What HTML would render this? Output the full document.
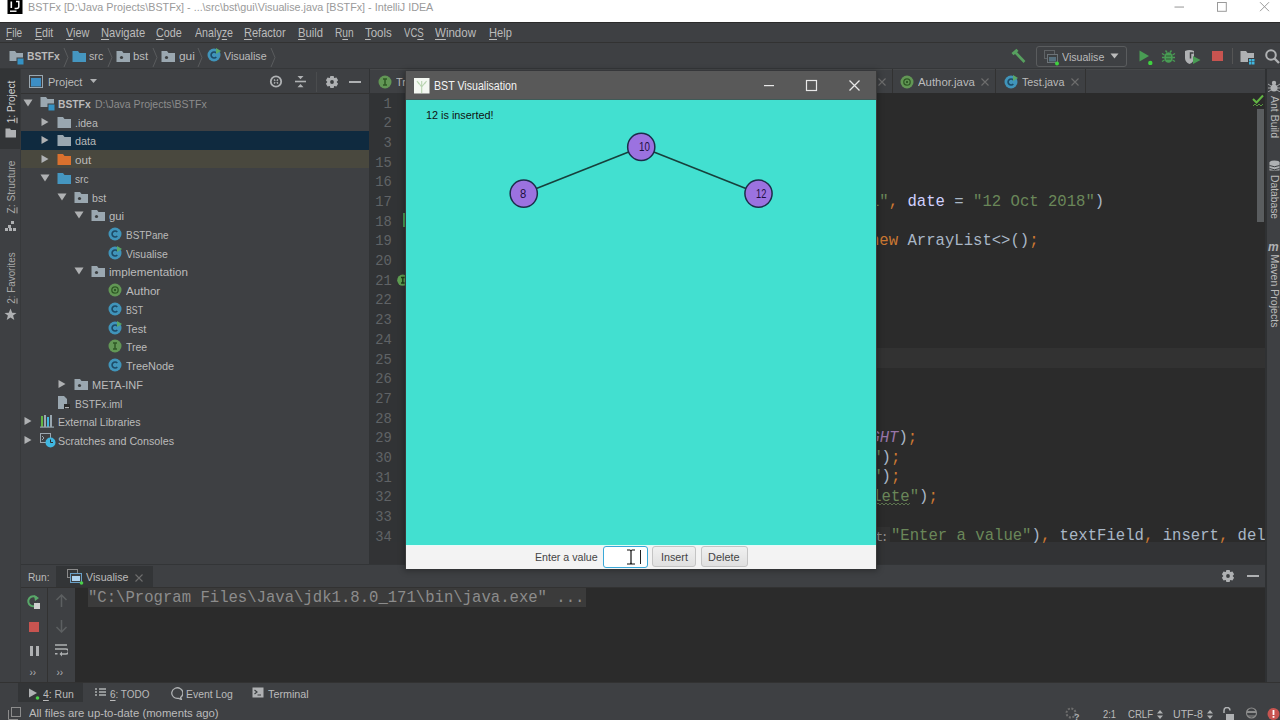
<!DOCTYPE html>
<html><head><meta charset="utf-8"><title>IntelliJ IDEA</title>
<style>
html,body{margin:0;padding:0;}
body{width:1280px;height:720px;overflow:hidden;position:relative;background:#3c3f41;font-family:"Liberation Sans",sans-serif;}
body>div{position:absolute;}
u{text-decoration-thickness:1px;text-underline-offset:1.5px;}
</style></head><body>
<div style="left:0px;top:0px;width:1280px;height:720px;background:#3e4043;"></div>
<div style="left:0px;top:0px;width:1280px;height:21.5px;background:#ffffff;"></div>
<div style="left:0px;top:21.5px;width:1280px;height:1.5px;background:#2b2b2b;"></div>
<svg style="position:absolute;left:7px;top:0px;" width="16" height="14" viewBox="0 0 16 14"><rect x="0.5" y="0" width="15" height="14" fill="#000"/><rect x="3.5" y="1.5" width="1.6" height="6.5" fill="#fff"/><path d="M9 1.5 H11.8 V6.5 Q11.8 8.5 9.5 8.5 H7.6" stroke="#fff" stroke-width="1.5" fill="none"/><rect x="3" y="10.5" width="6.5" height="1.4" fill="#fff"/></svg>
<div style="left:27.50px;top:0.19px;font-size:11.0px;line-height:15px;color:#9a9a9a;font-family:'Liberation Sans',sans-serif;white-space:pre;transform:scaleX(0.9784);transform-origin:0 0;">BSTFx [D:\Java Projects\BSTFx] - ...\src\bst\gui\Visualise.java [BSTFx] - IntelliJ IDEA</div>
<svg style="position:absolute;left:1168px;top:0px;" width="112" height="21" viewBox="0 0 112 21"><rect x="6.5" y="6.5" width="9.5" height="1.1" fill="#a0a0a0"/><rect x="49.5" y="2.5" width="8.8" height="8.8" fill="none" stroke="#9a9a9a" stroke-width="1"/><path d="M92 2.2 L101 11.2 M101 2.2 L92 11.2" stroke="#9a9a9a" stroke-width="1"/></svg>
<div style="left:6.10px;top:24.77px;font-size:12.2px;line-height:17px;color:#bbbbbb;font-family:'Liberation Sans',sans-serif;white-space:pre;transform:scaleX(0.8248);transform-origin:0 0;"><u>F</u>ile</div>
<div style="left:34.90px;top:24.77px;font-size:12.2px;line-height:17px;color:#bbbbbb;font-family:'Liberation Sans',sans-serif;white-space:pre;transform:scaleX(0.8714);transform-origin:0 0;"><u>E</u>dit</div>
<div style="left:66.00px;top:24.77px;font-size:12.2px;line-height:17px;color:#bbbbbb;font-family:'Liberation Sans',sans-serif;white-space:pre;transform:scaleX(0.8920);transform-origin:0 0;"><u>V</u>iew</div>
<div style="left:100.50px;top:24.77px;font-size:12.2px;line-height:17px;color:#bbbbbb;font-family:'Liberation Sans',sans-serif;white-space:pre;transform:scaleX(0.9170);transform-origin:0 0;"><u>N</u>avigate</div>
<div style="left:156.00px;top:24.77px;font-size:12.2px;line-height:17px;color:#bbbbbb;font-family:'Liberation Sans',sans-serif;white-space:pre;transform:scaleX(0.8854);transform-origin:0 0;"><u>C</u>ode</div>
<div style="left:194.60px;top:24.77px;font-size:12.2px;line-height:17px;color:#bbbbbb;font-family:'Liberation Sans',sans-serif;white-space:pre;transform:scaleX(0.8764);transform-origin:0 0;">Analy<u>z</u>e</div>
<div style="left:243.75px;top:24.77px;font-size:12.2px;line-height:17px;color:#bbbbbb;font-family:'Liberation Sans',sans-serif;white-space:pre;transform:scaleX(0.9042);transform-origin:0 0;"><u>R</u>efactor</div>
<div style="left:297.60px;top:24.77px;font-size:12.2px;line-height:17px;color:#bbbbbb;font-family:'Liberation Sans',sans-serif;white-space:pre;transform:scaleX(0.9227);transform-origin:0 0;"><u>B</u>uild</div>
<div style="left:334.75px;top:24.77px;font-size:12.2px;line-height:17px;color:#bbbbbb;font-family:'Liberation Sans',sans-serif;white-space:pre;transform:scaleX(0.8341);transform-origin:0 0;">R<u>u</u>n</div>
<div style="left:365.20px;top:24.77px;font-size:12.2px;line-height:17px;color:#bbbbbb;font-family:'Liberation Sans',sans-serif;white-space:pre;transform:scaleX(0.9419);transform-origin:0 0;"><u>T</u>ools</div>
<div style="left:403.80px;top:24.77px;font-size:12.2px;line-height:17px;color:#bbbbbb;font-family:'Liberation Sans',sans-serif;white-space:pre;transform:scaleX(0.7860);transform-origin:0 0;">VC<u>S</u></div>
<div style="left:434.70px;top:24.77px;font-size:12.2px;line-height:17px;color:#bbbbbb;font-family:'Liberation Sans',sans-serif;white-space:pre;transform:scaleX(0.9449);transform-origin:0 0;"><u>W</u>indow</div>
<div style="left:488.50px;top:24.77px;font-size:12.2px;line-height:17px;color:#bbbbbb;font-family:'Liberation Sans',sans-serif;white-space:pre;transform:scaleX(0.9097);transform-origin:0 0;"><u>H</u>elp</div>
<div style="left:0px;top:41.5px;width:1280px;height:1px;background:#323232;"></div>
<svg style="position:absolute;left:9px;top:50px;" width="16" height="15" viewBox="0 0 16 15"><path d="M0.5 1 H6 L7.5 3 H14 V11 H0.5 Z" fill="#9aa7b0"/><rect x="8" y="8" width="7" height="7" fill="#3592c4" stroke="#3c3f41" stroke-width="1"/></svg>
<div style="left:26.70px;top:47.91px;font-size:11.8px;line-height:17px;color:#bbbbbb;font-family:'Liberation Sans',sans-serif;font-weight:bold;white-space:pre;transform:scaleX(0.8753);transform-origin:0 0;">BSTFx</div>
<svg style="position:absolute;left:62.5px;top:47px;" width="6" height="21" viewBox="0 0 6 21"><path d="M1 1 L5 10.5 L1 20" fill="none" stroke="#5a5c5e" stroke-width="1"/></svg>
<svg style="position:absolute;left:72px;top:50px;" width="15" height="13" viewBox="0 0 15 13"><path d="M0.5 1 H6 L7.5 3 H14 V12 H0.5 Z" fill="#4596c0"/></svg>
<div style="left:88.80px;top:47.91px;font-size:11.8px;line-height:17px;color:#bbbbbb;font-family:'Liberation Sans',sans-serif;white-space:pre;transform:scaleX(0.9034);transform-origin:0 0;">src</div>
<svg style="position:absolute;left:106.5px;top:47px;" width="6" height="21" viewBox="0 0 6 21"><path d="M1 1 L5 10.5 L1 20" fill="none" stroke="#5a5c5e" stroke-width="1"/></svg>
<svg style="position:absolute;left:116px;top:50px;" width="15" height="13" viewBox="0 0 15 13"><path d="M0.5 1 H6 L7.5 3 H14 V12 H0.5 Z" fill="#9aa7b0"/><circle cx="5.5" cy="7.5" r="1.6" fill="#3c3f41"/></svg>
<div style="left:133.20px;top:47.91px;font-size:11.8px;line-height:17px;color:#bbbbbb;font-family:'Liberation Sans',sans-serif;white-space:pre;transform:scaleX(0.9660);transform-origin:0 0;">bst</div>
<svg style="position:absolute;left:152px;top:47px;" width="6" height="21" viewBox="0 0 6 21"><path d="M1 1 L5 10.5 L1 20" fill="none" stroke="#5a5c5e" stroke-width="1"/></svg>
<svg style="position:absolute;left:161px;top:50px;" width="15" height="13" viewBox="0 0 15 13"><path d="M0.5 1 H6 L7.5 3 H14 V12 H0.5 Z" fill="#9aa7b0"/><circle cx="5.5" cy="7.5" r="1.6" fill="#3c3f41"/></svg>
<div style="left:178.50px;top:47.91px;font-size:11.8px;line-height:17px;color:#bbbbbb;font-family:'Liberation Sans',sans-serif;white-space:pre;transform:scaleX(1.0095);transform-origin:0 0;">gui</div>
<svg style="position:absolute;left:197px;top:47px;" width="6" height="21" viewBox="0 0 6 21"><path d="M1 1 L5 10.5 L1 20" fill="none" stroke="#5a5c5e" stroke-width="1"/></svg>
<svg style="position:absolute;left:207px;top:48px;" width="15" height="14" viewBox="0 0 15 14"><circle cx="7" cy="7" r="6.5" fill="#4094ba"/><path d="M9.3 5 A3 3 0 1 0 9.3 9" stroke="#1d4a66" stroke-width="1.6" fill="none"/><path d="M9 0 L14 3 L9 6 Z" fill="#59a869"/></svg>
<div style="left:224.30px;top:47.91px;font-size:11.8px;line-height:17px;color:#bbbbbb;font-family:'Liberation Sans',sans-serif;white-space:pre;transform:scaleX(0.9064);transform-origin:0 0;">Visualise</div>
<svg style="position:absolute;left:269.5px;top:47px;" width="6" height="21" viewBox="0 0 6 21"><path d="M1 1 L5 10.5 L1 20" fill="none" stroke="#5a5c5e" stroke-width="1"/></svg>
<svg style="position:absolute;left:1010px;top:48px;" width="17" height="17" viewBox="0 0 17 17"><path d="M1.5 5 L6.5 0.8 L8.5 3 L3.5 7.2 Z" fill="#57a05f"/><path d="M5.5 4.5 L14.5 14" stroke="#57a05f" stroke-width="2.6"/></svg>
<div style="left:1036px;top:46px;width:91px;height:20.5px;border:1px solid #5a5c5e;border-radius:3px;box-sizing:border-box;"></div>
<svg style="position:absolute;left:1043px;top:49px;" width="17" height="17" viewBox="0 0 17 17"><rect x="1.5" y="1.5" width="10" height="8" fill="none" stroke="#5f6366"/><rect x="4.5" y="5.5" width="10" height="8" fill="#3d4042" stroke="#6c7378"/><rect x="6" y="8" width="7" height="4.5" fill="#56707e"/><circle cx="14" cy="14.5" r="2" fill="#3fd23f"/></svg>
<div style="left:1061.70px;top:48.91px;font-size:11.8px;line-height:17px;color:#bbbbbb;font-family:'Liberation Sans',sans-serif;white-space:pre;transform:scaleX(0.9000);transform-origin:0 0;">Visualise</div>
<svg style="position:absolute;left:1110px;top:53px;" width="10" height="6" viewBox="0 0 10 6"><path d="M0.5 0.5 H8.5 L4.5 5.5 Z" fill="#bbb"/></svg>
<svg style="position:absolute;left:1139px;top:48px;" width="14" height="17" viewBox="0 0 14 17"><path d="M0.5 2.5 L10 8 L0.5 13.5 Z" fill="#499c54"/><circle cx="11.3" cy="15" r="2.2" fill="#3fd23f"/></svg>
<svg style="position:absolute;left:1161px;top:49px;" width="15" height="15" viewBox="0 0 15 15"><path d="M1 4.5 L3.5 6 M1 8.5 H3.5 M1 12.5 L3.5 11 M14 4.5 L11.5 6 M14 8.5 H11.5 M14 12.5 L11.5 11 M4.5 1.5 L6 3.5 M10.5 1.5 L9 3.5" stroke="#499c54" stroke-width="1.4"/><ellipse cx="7.5" cy="8.5" rx="4.3" ry="5.2" fill="#499c54"/><path d="M5 7 H10 M5 10 H10" stroke="#2f5a33" stroke-width="1"/></svg>
<svg style="position:absolute;left:1184px;top:48px;" width="17" height="17" viewBox="0 0 17 17"><path d="M1 3 Q5.5 1 10 3 V10 Q10 14 5.5 16 Q1 14 1 10 Z" fill="#afb1b3"/><path d="M9.5 5 H6.5 V10.5" stroke="#3d4042" stroke-width="1.5" fill="none"/><path d="M9 8 L16.5 12 L9 16 Z" fill="#499c54"/></svg>
<div style="left:1212px;top:51.4px;width:10.5px;height:10px;background:#c75450;"></div>
<div style="left:1232px;top:48px;width:1px;height:16px;background:#555;"></div>
<svg style="position:absolute;left:1240px;top:50px;" width="16" height="15" viewBox="0 0 16 15"><path d="M0.5 1 H6 L7.5 3 H14 V12 H0.5 Z" fill="#afb1b3"/><rect x="8" y="8" width="7" height="7" fill="#3c3f41"/><rect x="9" y="9" width="2.5" height="2.5" fill="#40b6e0"/><rect x="12" y="9" width="2.5" height="2.5" fill="#40b6e0"/><rect x="9" y="12" width="2.5" height="2.5" fill="#40b6e0"/><rect x="12" y="12" width="2.5" height="2.5" fill="#40b6e0"/></svg>
<svg style="position:absolute;left:1264px;top:48px;" width="16" height="16" viewBox="0 0 16 16"><circle cx="7" cy="7" r="4.8" fill="none" stroke="#afb1b3" stroke-width="2"/><path d="M10.5 10.5 L15 15" stroke="#afb1b3" stroke-width="2.4"/></svg>
<div style="left:0px;top:68px;width:1280px;height:1px;background:#353739;"></div>
<div style="left:19.5px;top:69px;width:1px;height:613px;background:#37393b;"></div>
<div style="left:0px;top:69px;width:19.5px;height:80px;background:#323436;"></div>
<div style="left:11px;top:102.25px;transform:translate(-50%,-50%) rotate(-90deg) scaleX(0.8529);font-size:11.8px;line-height:15px;color:#cfcfcf;white-space:pre;"><u>1</u>: Project</div>
<svg style="position:absolute;left:5px;top:128px;" width="12" height="10" viewBox="0 0 12 10"><path d="M0.5 0.5 H5 L6 2 H11 V9.5 H0.5 Z" fill="#afb1b3"/></svg>
<div style="left:11px;top:187.20px;transform:translate(-50%,-50%) rotate(-90deg) scaleX(0.8568);font-size:11.8px;line-height:15px;color:#a8a8a8;white-space:pre;"><u>Z</u>: Structure</div>
<svg style="position:absolute;left:5px;top:221px;" width="12" height="10" viewBox="0 0 12 10"><rect x="6" y="0" width="3" height="3" fill="#afb1b3"/><rect x="3" y="4" width="3" height="3" fill="#afb1b3"/><rect x="0" y="7" width="3" height="3" fill="#afb1b3"/><rect x="4" y="7" width="3" height="3" fill="#afb1b3"/><rect x="8" y="7" width="3" height="3" fill="#afb1b3"/></svg>
<div style="left:11px;top:278.25px;transform:translate(-50%,-50%) rotate(-90deg) scaleX(0.8357);font-size:11.8px;line-height:15px;color:#a8a8a8;white-space:pre;"><u>2</u>: Favorites</div>
<svg style="position:absolute;left:4px;top:308px;" width="13" height="13" viewBox="0 0 13 13"><path d="M6.5 0.5 L8.2 4.7 L12.5 4.9 L9.1 7.6 L10.3 12 L6.5 9.6 L2.7 12 L3.9 7.6 L0.5 4.9 L4.8 4.7 Z" fill="#afb1b3"/></svg>
<div style="left:21px;top:92.5px;width:348px;height:1px;background:#323232;"></div>
<svg style="position:absolute;left:29px;top:75px;" width="15" height="13" viewBox="0 0 15 13"><rect x="0.5" y="0.5" width="13" height="12" fill="none" stroke="#9aa7b0"/><rect x="2" y="3" width="10" height="8.5" fill="#3d8fc6"/></svg>
<div style="left:48.40px;top:73.91px;font-size:11.8px;line-height:17px;color:#bbbbbb;font-family:'Liberation Sans',sans-serif;white-space:pre;transform:scaleX(0.9369);transform-origin:0 0;">Project</div>
<svg style="position:absolute;left:90px;top:79px;" width="8" height="5" viewBox="0 0 8 5"><path d="M0 0 H7 L3.5 4 Z" fill="#afb1b3"/></svg>
<svg style="position:absolute;left:269px;top:75px;" width="14" height="14" viewBox="0 0 14 14"><circle cx="7" cy="6.5" r="5.2" fill="none" stroke="#afb1b3" stroke-width="1.8"/><path d="M5 4.5 L6.2 5.7 M9 4.5 L7.8 5.7 M5 8.5 L6.2 7.3 M9 8.5 L7.8 7.3" stroke="#afb1b3" stroke-width="1.3"/></svg>
<svg style="position:absolute;left:294px;top:75px;" width="13" height="14" viewBox="0 0 13 14"><path d="M1 6.5 H12" stroke="#afb1b3" stroke-width="1.6"/><path d="M3.5 1 H9.5 L6.5 4.3 Z M3.5 12.2 H9.5 L6.5 8.9 Z" fill="#afb1b3"/></svg>
<div style="left:316px;top:72px;width:1px;height:20px;background:#4a4c4e;"></div>
<svg style="position:absolute;left:324.5px;top:75px;" width="14" height="14" viewBox="0 0 14 14"><path d="M4.81 2.96 L5.37 0.91 L8.63 0.91 L9.19 2.96 L9.40 3.08 L11.45 2.55 L13.09 5.37 L11.60 6.88 L11.60 7.12 L13.09 8.63 L11.45 11.45 L9.40 10.92 L9.19 11.04 L8.63 13.09 L5.37 13.09 L4.81 11.04 L4.60 10.92 L2.55 11.45 L0.91 8.63 L2.40 7.12 L2.40 6.88 L0.91 5.37 L2.55 2.55 L4.60 3.08 Z" fill="#afb1b3"/><circle cx="7" cy="7" r="1.9" fill="#3c3f41"/></svg>
<div style="left:349px;top:81px;width:12px;height:2px;background:#afb1b3;"></div>
<div style="left:21px;top:131.04px;width:348px;height:18.72px;background:#0f2a3f;"></div>
<div style="left:21px;top:149.76px;width:348px;height:18.72px;background:#49483e;"></div>
<svg style="position:absolute;left:23px;top:97.96px;" width="10" height="10" viewBox="0 0 10 10"><path d="M0.5 1.5 H9.5 L5 8.5 Z" fill="#afb1b3"/></svg>
<svg style="position:absolute;left:40px;top:95.96px;" width="16" height="15" viewBox="0 0 16 15"><path d="M0.5 1 H6 L7.5 3 H14 V11 H0.5 Z" fill="#9aa7b0"/><rect x="8" y="8" width="7" height="7" fill="#3592c4" stroke="#3c3f41" stroke-width="1"/></svg>
<div style="left:57.50px;top:95.91px;font-size:11.8px;line-height:17px;color:#bbbbbb;font-family:'Liberation Sans',sans-serif;font-weight:bold;white-space:pre;transform:scaleX(0.8726);transform-origin:0 0;">BSTFx</div>
<svg style="position:absolute;left:40px;top:116.67999999999999px;" width="10" height="10" viewBox="0 0 10 10"><path d="M1.5 1 L8.5 5 L1.5 9 Z" fill="#afb1b3"/></svg>
<svg style="position:absolute;left:57px;top:115.67999999999999px;" width="15" height="13" viewBox="0 0 15 13"><path d="M0.5 1 H6 L7.5 3 H14 V12 H0.5 Z" fill="#9aa7b0"/></svg>
<div style="left:74.50px;top:114.91px;font-size:11.8px;line-height:17px;color:#bbbbbb;font-family:'Liberation Sans',sans-serif;white-space:pre;transform:scaleX(0.8914);transform-origin:0 0;">.idea</div>
<svg style="position:absolute;left:40px;top:135.39999999999998px;" width="10" height="10" viewBox="0 0 10 10"><path d="M1.5 1 L8.5 5 L1.5 9 Z" fill="#afb1b3"/></svg>
<svg style="position:absolute;left:57px;top:134.39999999999998px;" width="15" height="13" viewBox="0 0 15 13"><path d="M0.5 1 H6 L7.5 3 H14 V12 H0.5 Z" fill="#9aa7b0"/></svg>
<div style="left:74.50px;top:132.91px;font-size:11.8px;line-height:17px;color:#bbbbbb;font-family:'Liberation Sans',sans-serif;white-space:pre;transform:scaleX(0.9186);transform-origin:0 0;">data</div>
<svg style="position:absolute;left:40px;top:154.12px;" width="10" height="10" viewBox="0 0 10 10"><path d="M1.5 1 L8.5 5 L1.5 9 Z" fill="#afb1b3"/></svg>
<svg style="position:absolute;left:57px;top:153.12px;" width="15" height="13" viewBox="0 0 15 13"><path d="M0.5 1 H6 L7.5 3 H14 V12 H0.5 Z" fill="#d9712e"/></svg>
<div style="left:74.50px;top:151.91px;font-size:11.8px;line-height:17px;color:#bbbbbb;font-family:'Liberation Sans',sans-serif;white-space:pre;transform:scaleX(0.9935);transform-origin:0 0;">out</div>
<svg style="position:absolute;left:40px;top:172.83999999999997px;" width="10" height="10" viewBox="0 0 10 10"><path d="M0.5 1.5 H9.5 L5 8.5 Z" fill="#afb1b3"/></svg>
<svg style="position:absolute;left:57px;top:171.83999999999997px;" width="15" height="13" viewBox="0 0 15 13"><path d="M0.5 1 H6 L7.5 3 H14 V12 H0.5 Z" fill="#4596c0"/></svg>
<div style="left:74.50px;top:170.91px;font-size:11.8px;line-height:17px;color:#bbbbbb;font-family:'Liberation Sans',sans-serif;white-space:pre;transform:scaleX(0.8525);transform-origin:0 0;">src</div>
<svg style="position:absolute;left:57px;top:191.56px;" width="10" height="10" viewBox="0 0 10 10"><path d="M0.5 1.5 H9.5 L5 8.5 Z" fill="#afb1b3"/></svg>
<svg style="position:absolute;left:74px;top:190.56px;" width="15" height="13" viewBox="0 0 15 13"><path d="M0.5 1 H6 L7.5 3 H14 V12 H0.5 Z" fill="#9aa7b0"/><circle cx="5.5" cy="7.5" r="1.6" fill="#3c3f41"/></svg>
<div style="left:91.50px;top:189.91px;font-size:11.8px;line-height:17px;color:#bbbbbb;font-family:'Liberation Sans',sans-serif;white-space:pre;transform:scaleX(0.8961);transform-origin:0 0;">bst</div>
<svg style="position:absolute;left:74px;top:210.27999999999997px;" width="10" height="10" viewBox="0 0 10 10"><path d="M0.5 1.5 H9.5 L5 8.5 Z" fill="#afb1b3"/></svg>
<svg style="position:absolute;left:91px;top:209.27999999999997px;" width="15" height="13" viewBox="0 0 15 13"><path d="M0.5 1 H6 L7.5 3 H14 V12 H0.5 Z" fill="#9aa7b0"/><circle cx="5.5" cy="7.5" r="1.6" fill="#3c3f41"/></svg>
<div style="left:108.50px;top:207.91px;font-size:11.8px;line-height:17px;color:#bbbbbb;font-family:'Liberation Sans',sans-serif;white-space:pre;transform:scaleX(0.9587);transform-origin:0 0;">gui</div>
<svg style="position:absolute;left:108px;top:227.0px;" width="15" height="14" viewBox="0 0 15 14"><circle cx="7" cy="7" r="6.5" fill="#4094ba"/><path d="M9.3 5 A3 3 0 1 0 9.3 9" stroke="#1d4a66" stroke-width="1.6" fill="none"/></svg>
<div style="left:125.50px;top:226.91px;font-size:11.8px;line-height:17px;color:#bbbbbb;font-family:'Liberation Sans',sans-serif;white-space:pre;transform:scaleX(0.8436);transform-origin:0 0;">BSTPane</div>
<svg style="position:absolute;left:108px;top:245.71999999999997px;" width="15" height="14" viewBox="0 0 15 14"><circle cx="7" cy="7" r="6.5" fill="#4094ba"/><path d="M9.3 5 A3 3 0 1 0 9.3 9" stroke="#1d4a66" stroke-width="1.6" fill="none"/><path d="M9 0 L14 3 L9 6 Z" fill="#59a869"/></svg>
<div style="left:125.50px;top:245.91px;font-size:11.8px;line-height:17px;color:#bbbbbb;font-family:'Liberation Sans',sans-serif;white-space:pre;transform:scaleX(0.8872);transform-origin:0 0;">Visualise</div>
<svg style="position:absolute;left:74px;top:266.44px;" width="10" height="10" viewBox="0 0 10 10"><path d="M0.5 1.5 H9.5 L5 8.5 Z" fill="#afb1b3"/></svg>
<svg style="position:absolute;left:91px;top:265.44px;" width="15" height="13" viewBox="0 0 15 13"><path d="M0.5 1 H6 L7.5 3 H14 V12 H0.5 Z" fill="#9aa7b0"/><circle cx="5.5" cy="7.5" r="1.6" fill="#3c3f41"/></svg>
<div style="left:108.50px;top:263.91px;font-size:11.8px;line-height:17px;color:#bbbbbb;font-family:'Liberation Sans',sans-serif;white-space:pre;transform:scaleX(0.9875);transform-origin:0 0;">implementation</div>
<svg style="position:absolute;left:108px;top:283.15999999999997px;" width="15" height="14" viewBox="0 0 15 14"><circle cx="7" cy="7" r="6.5" fill="#629755"/><circle cx="7" cy="7" r="3.2" stroke="#2f5a26" stroke-width="1.3" fill="none"/><circle cx="7" cy="7" r="1.2" fill="#2f5a26"/></svg>
<div style="left:125.50px;top:282.91px;font-size:11.8px;line-height:17px;color:#bbbbbb;font-family:'Liberation Sans',sans-serif;white-space:pre;transform:scaleX(0.9842);transform-origin:0 0;">Author</div>
<svg style="position:absolute;left:108px;top:301.88px;" width="15" height="14" viewBox="0 0 15 14"><circle cx="7" cy="7" r="6.5" fill="#4094ba"/><path d="M9.3 5 A3 3 0 1 0 9.3 9" stroke="#1d4a66" stroke-width="1.6" fill="none"/></svg>
<div style="left:125.50px;top:301.91px;font-size:11.8px;line-height:17px;color:#bbbbbb;font-family:'Liberation Sans',sans-serif;white-space:pre;transform:scaleX(0.7411);transform-origin:0 0;">BST</div>
<svg style="position:absolute;left:108px;top:320.6px;" width="15" height="14" viewBox="0 0 15 14"><circle cx="7" cy="7" r="6.5" fill="#4094ba"/><path d="M9.3 5 A3 3 0 1 0 9.3 9" stroke="#1d4a66" stroke-width="1.6" fill="none"/><path d="M9 0 L14 3 L9 6 Z" fill="#59a869"/></svg>
<div style="left:125.50px;top:320.91px;font-size:11.8px;line-height:17px;color:#bbbbbb;font-family:'Liberation Sans',sans-serif;white-space:pre;transform:scaleX(0.9381);transform-origin:0 0;">Test</div>
<svg style="position:absolute;left:108px;top:339.32px;" width="15" height="14" viewBox="0 0 15 14"><circle cx="7" cy="7" r="6.5" fill="#629755"/><path d="M5 4 H9 M5 10 H9 M7 4 V10" stroke="#2f5a26" stroke-width="1.5" fill="none"/></svg>
<div style="left:125.50px;top:338.91px;font-size:11.8px;line-height:17px;color:#bbbbbb;font-family:'Liberation Sans',sans-serif;white-space:pre;transform:scaleX(0.8903);transform-origin:0 0;">Tree</div>
<svg style="position:absolute;left:108px;top:358.03999999999996px;" width="15" height="14" viewBox="0 0 15 14"><circle cx="7" cy="7" r="6.5" fill="#4094ba"/><path d="M9.3 5 A3 3 0 1 0 9.3 9" stroke="#1d4a66" stroke-width="1.6" fill="none"/></svg>
<div style="left:125.50px;top:357.91px;font-size:11.8px;line-height:17px;color:#bbbbbb;font-family:'Liberation Sans',sans-serif;white-space:pre;transform:scaleX(0.9266);transform-origin:0 0;">TreeNode</div>
<svg style="position:absolute;left:57px;top:378.76px;" width="10" height="10" viewBox="0 0 10 10"><path d="M1.5 1 L8.5 5 L1.5 9 Z" fill="#afb1b3"/></svg>
<svg style="position:absolute;left:74px;top:377.76px;" width="15" height="13" viewBox="0 0 15 13"><path d="M0.5 1 H6 L7.5 3 H14 V12 H0.5 Z" fill="#9aa7b0"/><circle cx="5.5" cy="7.5" r="1.6" fill="#3c3f41"/></svg>
<div style="left:91.50px;top:376.91px;font-size:11.8px;line-height:17px;color:#bbbbbb;font-family:'Liberation Sans',sans-serif;white-space:pre;transform:scaleX(0.9302);transform-origin:0 0;">META-INF</div>
<svg style="position:absolute;left:57px;top:395.48px;" width="14" height="15" viewBox="0 0 14 15"><path d="M1 1 H7 L10 4 V14 H1 Z" fill="#9aa7b0"/><rect x="7" y="9" width="6" height="5" fill="#2b2b2b"/><rect x="8" y="12" width="4" height="1.2" fill="#afb1b3"/></svg>
<div style="left:74.50px;top:395.91px;font-size:11.8px;line-height:17px;color:#bbbbbb;font-family:'Liberation Sans',sans-serif;white-space:pre;transform:scaleX(0.8715);transform-origin:0 0;">BSTFx.iml</div>
<svg style="position:absolute;left:23px;top:416.20000000000005px;" width="10" height="10" viewBox="0 0 10 10"><path d="M1.5 1 L8.5 5 L1.5 9 Z" fill="#afb1b3"/></svg>
<svg style="position:absolute;left:40px;top:414.20000000000005px;" width="15" height="14" viewBox="0 0 15 14"><rect x="1" y="2" width="2" height="11" fill="#62b543"/><rect x="4" y="1" width="2" height="12" fill="#9aa7b0"/><rect x="7" y="3" width="2" height="10" fill="#40b6e0"/><rect x="10" y="1" width="2" height="12" fill="#9aa7b0"/><rect x="0" y="12.5" width="14" height="1.2" fill="#9aa7b0"/></svg>
<div style="left:57.50px;top:413.91px;font-size:11.8px;line-height:17px;color:#bbbbbb;font-family:'Liberation Sans',sans-serif;white-space:pre;transform:scaleX(0.8987);transform-origin:0 0;">External Libraries</div>
<svg style="position:absolute;left:23px;top:434.91999999999996px;" width="10" height="10" viewBox="0 0 10 10"><path d="M1.5 1 L8.5 5 L1.5 9 Z" fill="#afb1b3"/></svg>
<svg style="position:absolute;left:40px;top:432.91999999999996px;" width="16" height="15" viewBox="0 0 16 15"><rect x="0.5" y="0.5" width="10" height="9" fill="none" stroke="#9aa7b0"/><path d="M2 3 L4 5 L2 7" stroke="#9aa7b0" fill="none"/><circle cx="10.5" cy="9.5" r="5" fill="#40b6e0"/><path d="M10.5 6.5 V9.5 H13" stroke="#2b2b2b" fill="none"/></svg>
<div style="left:57.50px;top:432.91px;font-size:11.8px;line-height:17px;color:#bbbbbb;font-family:'Liberation Sans',sans-serif;white-space:pre;transform:scaleX(0.9071);transform-origin:0 0;">Scratches and Consoles</div>
<div style="left:95.30px;top:95.91px;font-size:11.8px;line-height:17px;color:#8c8c8c;font-family:'Liberation Sans',sans-serif;white-space:pre;transform:scaleX(0.8922);transform-origin:0 0;">D:\Java Projects\BSTFx</div>
<div style="left:369px;top:69px;width:1px;height:496px;background:#313335;"></div>
<div style="left:370px;top:92.5px;width:895px;height:1px;background:#333537;"></div>
<div style="left:370px;top:69px;width:895px;height:1px;background:#46484a;"></div>
<svg style="position:absolute;left:378px;top:75px;" width="15" height="14" viewBox="0 0 15 14"><circle cx="7" cy="7" r="6.5" fill="#629755"/><path d="M5 4 H9 M5 10 H9 M7 4 V10" stroke="#2f5a26" stroke-width="1.5" fill="none"/></svg>
<div style="left:395.80px;top:73.91px;font-size:11.8px;line-height:17px;color:#bbbbbb;font-family:'Liberation Sans',sans-serif;white-space:pre;transform:scaleX(0.9234);transform-origin:0 0;">Tree.java</div>
<div style="left:891.5px;top:69px;width:1px;height:24px;background:#323232;"></div>
<svg style="position:absolute;left:878px;top:78px;" width="8" height="8" viewBox="0 0 8 8"><path d="M0.5 0.5 L7.5 7.5 M7.5 0.5 L0.5 7.5" stroke="#6e6e6e" stroke-width="1.1"/></svg>
<svg style="position:absolute;left:981px;top:78px;" width="8" height="8" viewBox="0 0 8 8"><path d="M0.5 0.5 L7.5 7.5 M7.5 0.5 L0.5 7.5" stroke="#6e6e6e" stroke-width="1.1"/></svg>
<svg style="position:absolute;left:900px;top:75px;" width="15" height="14" viewBox="0 0 15 14"><circle cx="7" cy="7" r="6.5" fill="#629755"/><circle cx="7" cy="7" r="3.2" stroke="#2f5a26" stroke-width="1.3" fill="none"/><circle cx="7" cy="7" r="1.2" fill="#2f5a26"/></svg>
<div style="left:917.50px;top:73.91px;font-size:11.8px;line-height:17px;color:#bbbbbb;font-family:'Liberation Sans',sans-serif;white-space:pre;transform:scaleX(0.9639);transform-origin:0 0;">Author.java</div>
<div style="left:995px;top:69px;width:1px;height:24px;background:#323232;"></div>
<svg style="position:absolute;left:1004px;top:75px;" width="15" height="14" viewBox="0 0 15 14"><circle cx="7" cy="7" r="6.5" fill="#4094ba"/><path d="M9.3 5 A3 3 0 1 0 9.3 9" stroke="#1d4a66" stroke-width="1.6" fill="none"/><path d="M9 0 L14 3 L9 6 Z" fill="#59a869"/></svg>
<div style="left:1022.00px;top:73.91px;font-size:11.8px;line-height:17px;color:#bbbbbb;font-family:'Liberation Sans',sans-serif;white-space:pre;transform:scaleX(0.9106);transform-origin:0 0;">Test.java</div>
<svg style="position:absolute;left:1071px;top:78px;" width="8" height="8" viewBox="0 0 8 8"><path d="M0.5 0.5 L7.5 7.5 M7.5 0.5 L0.5 7.5" stroke="#6e6e6e" stroke-width="1.1"/></svg>
<div style="left:1085px;top:69px;width:1px;height:24px;background:#323232;"></div>
<div style="left:370px;top:93px;width:36px;height:449px;background:#313335;"></div>
<div style="left:406px;top:93px;width:859px;height:449px;background:#2b2b2b;"></div>
<div style="left:370px;top:542px;width:895px;height:22.5px;background:#323335;"></div>
<div style="left:406px;top:348px;width:859px;height:19.7px;background:#323232;"></div>
<div style="left:383.62px;top:95.23px;font-size:13.8px;line-height:19px;color:#606366;font-family:'Liberation Mono',monospace;white-space:pre;">1</div>
<div style="left:383.62px;top:114.23px;font-size:13.8px;line-height:19px;color:#606366;font-family:'Liberation Mono',monospace;white-space:pre;">2</div>
<div style="left:383.62px;top:134.23px;font-size:13.8px;line-height:19px;color:#606366;font-family:'Liberation Mono',monospace;white-space:pre;">3</div>
<div style="left:375.34px;top:154.23px;font-size:13.8px;line-height:19px;color:#606366;font-family:'Liberation Mono',monospace;white-space:pre;">15</div>
<div style="left:375.34px;top:173.23px;font-size:13.8px;line-height:19px;color:#606366;font-family:'Liberation Mono',monospace;white-space:pre;">16</div>
<div style="left:375.34px;top:193.23px;font-size:13.8px;line-height:19px;color:#606366;font-family:'Liberation Mono',monospace;white-space:pre;">17</div>
<div style="left:375.34px;top:213.23px;font-size:13.8px;line-height:19px;color:#606366;font-family:'Liberation Mono',monospace;white-space:pre;">18</div>
<div style="left:375.34px;top:232.23px;font-size:13.8px;line-height:19px;color:#606366;font-family:'Liberation Mono',monospace;white-space:pre;">19</div>
<div style="left:375.34px;top:252.23px;font-size:13.8px;line-height:19px;color:#606366;font-family:'Liberation Mono',monospace;white-space:pre;">20</div>
<div style="left:375.34px;top:272.23px;font-size:13.8px;line-height:19px;color:#606366;font-family:'Liberation Mono',monospace;white-space:pre;">21</div>
<div style="left:375.34px;top:291.23px;font-size:13.8px;line-height:19px;color:#606366;font-family:'Liberation Mono',monospace;white-space:pre;">22</div>
<div style="left:375.34px;top:311.23px;font-size:13.8px;line-height:19px;color:#606366;font-family:'Liberation Mono',monospace;white-space:pre;">23</div>
<div style="left:375.34px;top:331.23px;font-size:13.8px;line-height:19px;color:#606366;font-family:'Liberation Mono',monospace;white-space:pre;">24</div>
<div style="left:375.34px;top:351.23px;font-size:13.8px;line-height:19px;color:#606366;font-family:'Liberation Mono',monospace;white-space:pre;">25</div>
<div style="left:375.34px;top:370.23px;font-size:13.8px;line-height:19px;color:#606366;font-family:'Liberation Mono',monospace;white-space:pre;">26</div>
<div style="left:375.34px;top:390.23px;font-size:13.8px;line-height:19px;color:#606366;font-family:'Liberation Mono',monospace;white-space:pre;">27</div>
<div style="left:375.34px;top:410.23px;font-size:13.8px;line-height:19px;color:#606366;font-family:'Liberation Mono',monospace;white-space:pre;">28</div>
<div style="left:375.34px;top:429.23px;font-size:13.8px;line-height:19px;color:#606366;font-family:'Liberation Mono',monospace;white-space:pre;">29</div>
<div style="left:375.34px;top:449.23px;font-size:13.8px;line-height:19px;color:#606366;font-family:'Liberation Mono',monospace;white-space:pre;">30</div>
<div style="left:375.34px;top:469.23px;font-size:13.8px;line-height:19px;color:#606366;font-family:'Liberation Mono',monospace;white-space:pre;">31</div>
<div style="left:375.34px;top:488.23px;font-size:13.8px;line-height:19px;color:#606366;font-family:'Liberation Mono',monospace;white-space:pre;">32</div>
<div style="left:375.34px;top:508.23px;font-size:13.8px;line-height:19px;color:#606366;font-family:'Liberation Mono',monospace;white-space:pre;">33</div>
<div style="left:375.34px;top:528.23px;font-size:13.8px;line-height:19px;color:#606366;font-family:'Liberation Mono',monospace;white-space:pre;">34</div>
<div style="left:1257px;top:108.5px;width:7px;height:113px;background:#5a5d5f;"></div>
<svg style="position:absolute;left:1252px;top:94px;" width="13" height="13" viewBox="0 0 13 13"><path d="M1 5 L4.5 8.5 L11 1.5" stroke="#62b543" stroke-width="2" fill="none"/><path d="M1 12 L3 10 L5 12 L7 10 L9 12 L11 10" stroke="#62b543" stroke-width="0.8" fill="none"/></svg>
<div style="left:813.81px;top:191.24px;font-size:15.62px;line-height:22px;color:#a9b7c6;font-family:'Liberation Mono',monospace;white-space:pre;"><span style="color:#6a8759;">Agarwal"</span><span style="color:#cc7832;">,</span><span style="color:#a9b7c6;"> </span><span style="color:#d0d0ff;">date</span><span style="color:#a9b7c6;"> = </span><span style="color:#6a8759;">"12 Oct 2018"</span><span style="color:#a9b7c6;">)</span></div>
<div style="left:795.04px;top:230.24px;font-size:15.62px;line-height:22px;color:#a9b7c6;font-family:'Liberation Mono',monospace;white-space:pre;"><span style="color:#a9b7c6;">ist&lt;&gt; = </span><span style="color:#cc7832;">new</span><span style="color:#a9b7c6;"> ArrayList&lt;&gt;()</span><span style="color:#cc7832;">;</span></div>
<div style="left:851.58px;top:427.24px;font-size:15.62px;line-height:22px;color:#a9b7c6;font-family:'Liberation Mono',monospace;white-space:pre;"><span style="color:#9876aa;font-style:italic;">RIGHT</span><span style="color:#a9b7c6;">)</span><span style="color:#cc7832;">;</span></div>
<div style="left:844.15px;top:447.24px;font-size:15.62px;line-height:22px;color:#a9b7c6;font-family:'Liberation Mono',monospace;white-space:pre;"><span style="color:#6a8759;">ert"</span><span style="color:#a9b7c6;">)</span><span style="color:#cc7832;">;</span></div>
<div style="left:844.15px;top:466.24px;font-size:15.62px;line-height:22px;color:#a9b7c6;font-family:'Liberation Mono',monospace;white-space:pre;"><span style="color:#6a8759;">ear"</span><span style="color:#a9b7c6;">)</span><span style="color:#cc7832;">;</span></div>
<div style="left:844.07px;top:486.24px;font-size:15.62px;line-height:22px;color:#a9b7c6;font-family:'Liberation Mono',monospace;white-space:pre;"><span style="color:#6a8759;">"Delete"</span><span style="color:#a9b7c6;">)</span><span style="color:#cc7832;">;</span></div>
<div style="left:872.26px;top:525.24px;font-size:15.62px;line-height:22px;color:#a9b7c6;font-family:'Liberation Mono',monospace;white-space:pre;"><span style="color:#a9b7c6;">  </span><span style="color:#6a8759;">"Enter a value"</span><span style="color:#a9b7c6;">)</span><span style="color:#cc7832;">,</span><span style="color:#a9b7c6;"> textField</span><span style="color:#cc7832;">,</span><span style="color:#a9b7c6;"> insert</span><span style="color:#cc7832;">,</span><span style="color:#a9b7c6;"> delete</span></div>
<div style="left:876px;top:527px;width:14px;height:15px;background:#313131;"></div>
<div style="left:875.50px;top:528.94px;font-size:13px;line-height:18px;color:#8a8a8a;font-family:'Liberation Mono',monospace;white-space:pre;letter-spacing:-2.5px;">t:</div>
<svg style="position:absolute;left:876px;top:501.5px;" width="35" height="4" viewBox="0 0 35 4"><path d="M0 3 L2 1 L4 3 L6 1 L8 3 L10 1 L12 3 L14 1 L16 3 L18 1 L20 3 L22 1 L24 3 L26 1 L28 3 L30 1 L32 3 L34 1" stroke="#6a8759" stroke-width="0.8" fill="none"/></svg>
<div style="left:403px;top:213px;width:3px;height:14px;background:#499c54;"></div>
<svg style="position:absolute;left:396px;top:273px;" width="12" height="13" viewBox="0 0 12 13"><circle cx="6.8" cy="7.2" r="5.6" fill="#5fa052"/><path d="M5 4.5 H8.6 M5 10 H8.6 M6.8 4.5 V10" stroke="#1f3d1a" stroke-width="1.4"/></svg>
<div style="left:1265px;top:69px;width:15px;height:613px;background:#3e4043;"></div>
<div style="left:1265px;top:69px;width:1.5px;height:613px;background:#2f3133;"></div>
<div style="left:1274px;top:117.00px;transform:translate(-50%,-50%) rotate(90deg) scaleX(0.8895);font-size:11.8px;line-height:15px;color:#bbbbbb;white-space:pre;">Ant Build</div>
<svg style="position:absolute;left:1268px;top:80px;" width="12" height="12" viewBox="0 0 12 12"><ellipse cx="6" cy="8" rx="3.5" ry="3.5" fill="#afb1b3"/><circle cx="6" cy="3" r="2.2" fill="#afb1b3"/><path d="M0 4 L12 12 M12 4 L0 12 M0 8 H12" stroke="#afb1b3" stroke-width="0.9"/></svg>
<div style="left:1274px;top:197.00px;transform:translate(-50%,-50%) rotate(90deg) scaleX(0.8713);font-size:11.8px;line-height:15px;color:#bbbbbb;white-space:pre;">Database</div>
<svg style="position:absolute;left:1269px;top:160px;" width="11" height="12" viewBox="0 0 11 12"><ellipse cx="5.5" cy="2.5" rx="5" ry="2" fill="#afb1b3"/><rect x="0.5" y="2.5" width="10" height="8" fill="#afb1b3"/><path d="M0.5 5.5 Q5.5 8 10.5 5.5 M0.5 8.5 Q5.5 11 10.5 8.5" stroke="#3c3f41" fill="none"/></svg>
<div style="left:1268.00px;top:238.84px;font-size:12px;line-height:17px;color:#afb1b3;font-family:'Liberation Sans',sans-serif;font-weight:bold;white-space:pre;font-style:italic;">m</div>
<div style="left:1274px;top:291.05px;transform:translate(-50%,-50%) rotate(90deg) scaleX(0.8967);font-size:11.8px;line-height:15px;color:#bbbbbb;white-space:pre;">Maven Projects</div>
<div style="left:21px;top:564px;width:1244px;height:1px;background:#333537;"></div>
<div style="left:21px;top:565.5px;width:1244px;height:22px;background:#3e4043;"></div>
<div style="left:27.50px;top:568.91px;font-size:11.8px;line-height:17px;color:#bbbbbb;font-family:'Liberation Sans',sans-serif;white-space:pre;transform:scaleX(0.8627);transform-origin:0 0;">Run:</div>
<div style="left:56px;top:566px;width:97px;height:21px;background:#333537;"></div>
<svg style="position:absolute;left:67px;top:569px;" width="17" height="16" viewBox="0 0 17 16"><rect x="0.5" y="0.5" width="10" height="8" fill="none" stroke="#8a8a8a"/><rect x="3.5" y="4.5" width="11" height="9" fill="#3c3f41" stroke="#6aa0c8"/><rect x="5" y="7" width="8" height="5" fill="#afd4f0"/><circle cx="14.5" cy="14" r="1.8" fill="#4ad04a"/></svg>
<div style="left:86.25px;top:568.91px;font-size:11.8px;line-height:17px;color:#bbbbbb;font-family:'Liberation Sans',sans-serif;white-space:pre;transform:scaleX(0.9043);transform-origin:0 0;">Visualise</div>
<svg style="position:absolute;left:135px;top:574px;" width="8" height="8" viewBox="0 0 8 8"><path d="M0.5 0.5 L7.5 7.5 M7.5 0.5 L0.5 7.5" stroke="#6e6e6e" stroke-width="1.1"/></svg>
<svg style="position:absolute;left:1221px;top:569px;" width="14" height="14" viewBox="0 0 14 14"><path d="M4.81 2.96 L5.37 0.91 L8.63 0.91 L9.19 2.96 L9.40 3.08 L11.45 2.55 L13.09 5.37 L11.60 6.88 L11.60 7.12 L13.09 8.63 L11.45 11.45 L9.40 10.92 L9.19 11.04 L8.63 13.09 L5.37 13.09 L4.81 11.04 L4.60 10.92 L2.55 11.45 L0.91 8.63 L2.40 7.12 L2.40 6.88 L0.91 5.37 L2.55 2.55 L4.60 3.08 Z" fill="#afb1b3"/><circle cx="7" cy="7" r="1.9" fill="#3c3f41"/></svg>
<div style="left:1246.5px;top:575px;width:12px;height:2px;background:#afb1b3;"></div>
<div style="left:21px;top:587px;width:1244px;height:1px;background:#323232;"></div>
<div style="left:47px;top:588px;width:1px;height:94px;background:#323232;"></div>
<div style="left:75px;top:588px;width:1190px;height:94px;background:#2b2b2b;"></div>
<svg style="position:absolute;left:26px;top:594px;" width="16" height="16" viewBox="0 0 16 16"><path d="M11 4 A5 5 0 1 0 12 9" stroke="#59a869" stroke-width="2" fill="none"/><path d="M8 1 L13 4 L9 7 Z" fill="#59a869"/><rect x="8" y="9" width="6" height="6" fill="#d0d0d0"/></svg>
<div style="left:28.5px;top:621.5px;width:10px;height:10px;background:#c75450;"></div>
<div style="left:29.5px;top:645.5px;width:3px;height:10px;background:#afb1b3;"></div>
<div style="left:35.5px;top:645.5px;width:3px;height:10px;background:#afb1b3;"></div>
<div style="left:29.50px;top:666.04px;font-size:10px;line-height:14px;color:#afb1b3;font-family:'Liberation Sans',sans-serif;white-space:pre;">››</div>
<svg style="position:absolute;left:55px;top:594px;" width="13" height="14" viewBox="0 0 13 14"><path d="M6.5 1 V13 M1.5 6 L6.5 1 L11.5 6" stroke="#5c5f61" stroke-width="1.5" fill="none"/></svg>
<svg style="position:absolute;left:55px;top:619px;" width="13" height="14" viewBox="0 0 13 14"><path d="M6.5 1 V13 M1.5 8 L6.5 13 L11.5 8" stroke="#5c5f61" stroke-width="1.5" fill="none"/></svg>
<svg style="position:absolute;left:54px;top:643px;" width="14" height="14" viewBox="0 0 14 14"><path d="M1 2 H13 M1 6 H12 A2.5 2.5 0 0 1 12 11 H7" stroke="#afb1b3" stroke-width="1.5" fill="none"/><path d="M8 8.5 L5.5 11 L8 13.5 Z" fill="#afb1b3"/><rect x="1" y="10" width="2.5" height="1.5" fill="#afb1b3"/></svg>
<div style="left:56.50px;top:666.04px;font-size:10px;line-height:14px;color:#afb1b3;font-family:'Liberation Sans',sans-serif;white-space:pre;">››</div>
<div style="left:88px;top:587.5px;width:497.6px;height:19.5px;background:#3b3b3b;"></div>
<div style="left:88.00px;top:587.24px;font-size:15.62px;line-height:22px;color:#8c8c8c;font-family:'Liberation Mono',monospace;white-space:pre;">"C:\Program Files\Java\jdk1.8.0_171\bin\java.exe" ...</div>
<div style="left:0px;top:682px;width:1280px;height:1px;background:#323232;"></div>
<div style="left:18px;top:683px;width:65px;height:19px;background:#333537;"></div>
<svg style="position:absolute;left:28px;top:688px;" width="12" height="12" viewBox="0 0 12 12"><path d="M1 0.5 L9 5 L1 9.5 Z" fill="#afb1b3"/><circle cx="9.5" cy="10" r="1.8" fill="#4ad04a"/></svg>
<div style="left:43.00px;top:685.91px;font-size:11.8px;line-height:17px;color:#bbbbbb;font-family:'Liberation Sans',sans-serif;white-space:pre;transform:scaleX(0.8849);transform-origin:0 0;"><u>4</u>: Run</div>
<svg style="position:absolute;left:95px;top:688px;" width="11" height="10" viewBox="0 0 11 10"><path d="M0 1 H2 M4 1 H11 M0 4 H2 M4 4 H11 M0 7 H2 M4 7 H11" stroke="#afb1b3" stroke-width="1.5"/></svg>
<div style="left:110.00px;top:685.91px;font-size:11.8px;line-height:17px;color:#bbbbbb;font-family:'Liberation Sans',sans-serif;white-space:pre;transform:scaleX(0.8425);transform-origin:0 0;"><u>6</u>: TODO</div>
<svg style="position:absolute;left:169px;top:687px;" width="14" height="13" viewBox="0 0 14 13"><path d="M11.5 10.5 A5.6 5.3 0 1 0 9.5 11.3 L12.5 12.5 Z" fill="none" stroke="#afb1b3" stroke-width="1.3" stroke-linejoin="round"/></svg>
<div style="left:186.00px;top:685.91px;font-size:11.8px;line-height:17px;color:#bbbbbb;font-family:'Liberation Sans',sans-serif;white-space:pre;transform:scaleX(0.8809);transform-origin:0 0;">Event Log</div>
<svg style="position:absolute;left:252px;top:687px;" width="12" height="11" viewBox="0 0 12 11"><rect x="0.5" y="0.5" width="11" height="10" fill="#afb1b3"/><path d="M2.5 3 L5 5 L2.5 7 M5.5 8 H9" stroke="#3c3f41" stroke-width="1.2" fill="none"/></svg>
<div style="left:268.00px;top:685.91px;font-size:11.8px;line-height:17px;color:#bbbbbb;font-family:'Liberation Sans',sans-serif;white-space:pre;transform:scaleX(0.9141);transform-origin:0 0;">Terminal</div>
<div style="left:0px;top:702.5px;width:1280px;height:17.5px;background:#3e4043;"></div>
<svg style="position:absolute;left:8px;top:707px;" width="14" height="13" viewBox="0 0 14 13"><rect x="3.5" y="0.5" width="9" height="9" fill="none" stroke="#8c8c8c"/><path d="M0.5 3 V12.5 H10" stroke="#8c8c8c" fill="none"/></svg>
<div style="left:29.40px;top:704.91px;font-size:11.8px;line-height:17px;color:#bbbbbb;font-family:'Liberation Sans',sans-serif;white-space:pre;transform:scaleX(0.9607);transform-origin:0 0;">All files are up-to-date (moments ago)</div>
<svg style="position:absolute;left:1065px;top:707px;" width="15" height="13" viewBox="0 0 15 13"><circle cx="6" cy="6" r="4.5" fill="none" stroke="#6e6e6e" stroke-width="2" stroke-dasharray="2 1.5"/><text x="9" y="13" font-size="9" font-weight="bold" fill="#afb1b3" font-family="Liberation Sans">?</text></svg>
<div style="left:1103.00px;top:705.91px;font-size:11.8px;line-height:17px;color:#bbbbbb;font-family:'Liberation Sans',sans-serif;white-space:pre;transform:scaleX(0.7924);transform-origin:0 0;">2:1</div>
<div style="left:1127.50px;top:705.91px;font-size:11.8px;line-height:17px;color:#bbbbbb;font-family:'Liberation Sans',sans-serif;white-space:pre;transform:scaleX(0.8114);transform-origin:0 0;">CRLF</div>
<svg style="position:absolute;left:1157px;top:710px;" width="6" height="9" viewBox="0 0 6 9"><path d="M0 3.5 L3 0 L6 3.5 Z M0 5.5 L3 9 L6 5.5 Z" fill="#afb1b3"/></svg>
<div style="left:1172.50px;top:705.91px;font-size:11.8px;line-height:17px;color:#bbbbbb;font-family:'Liberation Sans',sans-serif;white-space:pre;transform:scaleX(0.8976);transform-origin:0 0;">UTF-8</div>
<svg style="position:absolute;left:1207px;top:710px;" width="6" height="9" viewBox="0 0 6 9"><path d="M0 3.5 L3 0 L6 3.5 Z M0 5.5 L3 9 L6 5.5 Z" fill="#afb1b3"/></svg>
<svg style="position:absolute;left:1222px;top:707px;" width="13" height="13" viewBox="0 0 13 13"><path d="M2 6 V3.5 A3 3 0 0 1 8 3.5" stroke="#afb1b3" stroke-width="1.5" fill="none"/><rect x="4" y="7" width="8" height="6" fill="#afb1b3"/></svg>
<svg style="position:absolute;left:1245px;top:707px;" width="13" height="13" viewBox="0 0 13 13"><circle cx="6.5" cy="6" r="5" fill="none" stroke="#8c8c8c" stroke-width="1.2"/><rect x="2" y="4" width="9" height="2" fill="#8c8c8c"/><path d="M3 9 H10" stroke="#8c8c8c"/></svg>
<svg style="position:absolute;left:1267px;top:707px;" width="13" height="13" viewBox="0 0 13 13"><circle cx="6.5" cy="7" r="6" fill="#c75450"/><rect x="5.6" y="3" width="1.8" height="5" fill="#fff"/><rect x="5.6" y="9" width="1.8" height="1.8" fill="#fff"/></svg>
<div style="left:405px;top:70.5px;width:471.5px;height:498.5px;background:#3a3a3a;box-shadow:0 1px 6px 1px rgba(0,0,0,0.3);"></div>
<div style="left:406px;top:71px;width:470px;height:28.5px;background:#595959;"></div>
<div style="left:406px;top:98.5px;width:470px;height:1px;background:#3f5a57;"></div>
<svg style="position:absolute;left:413.5px;top:77.5px;" width="16" height="16" viewBox="0 0 16 16"><rect x="0" y="0" width="15.5" height="15.5" fill="#f4f8f2"/><path d="M7.7 15 V7 M7.7 9 L4 4 M7.7 9 L11.5 4 M5 6 L3 3 M10.5 6 L12.5 3 M7.7 7 V3" stroke="#b8d4b0" stroke-width="1.1" fill="none"/></svg>
<div style="left:434.00px;top:77.84px;font-size:12.0px;line-height:17px;color:#f4f4f4;font-family:'Liberation Sans',sans-serif;white-space:pre;transform:scaleX(0.8856);transform-origin:0 0;">BST Visualisation</div>
<svg style="position:absolute;left:760px;top:78px;" width="110" height="16" viewBox="0 0 110 16"><rect x="4" y="7" width="10" height="1.2" fill="#e8e8e8"/><rect x="46.5" y="2.5" width="10" height="10" fill="none" stroke="#e8e8e8" stroke-width="1.2"/><path d="M89.5 2.5 L99.5 12.5 M99.5 2.5 L89.5 12.5" stroke="#e8e8e8" stroke-width="1.3"/></svg>
<div style="left:406px;top:99.5px;width:470px;height:445px;background:#42e0d0;"></div>
<div style="left:406px;top:544.5px;width:470px;height:24px;background:#f3f3f3;"></div>
<div style="left:406px;top:544.5px;width:470px;height:1px;background:#e4fbf8;"></div>
<div style="left:426.00px;top:107.48px;font-size:11.6px;line-height:16px;color:#111111;font-family:'Liberation Sans',sans-serif;white-space:pre;transform:scaleX(0.9353);transform-origin:0 0;">12 is inserted!</div>
<svg style="position:absolute;left:406px;top:99px;" width="470" height="120" viewBox="0 0 470 120"><line x1="235.25" y1="47.9" x2="117.75" y2="94.6" stroke="#17403c" stroke-width="1.6"/><line x1="235.25" y1="47.9" x2="352.5" y2="94.6" stroke="#17403c" stroke-width="1.6"/><circle cx="235.25" cy="47.9" r="13.6" fill="#9b72e0" stroke="#1c2d4a" stroke-width="1.5"/><circle cx="117.75" cy="94.6" r="13.6" fill="#9b72e0" stroke="#1c2d4a" stroke-width="1.5"/><circle cx="352.5" cy="94.6" r="13.6" fill="#9b72e0" stroke="#1c2d4a" stroke-width="1.5"/></svg>
<div style="left:638.50px;top:138.84px;font-size:12px;line-height:17px;color:#1e1040;font-family:'Liberation Sans',sans-serif;white-space:pre;transform:scaleX(0.8169);transform-origin:0 0;">10</div>
<div style="left:520.00px;top:185.84px;font-size:12px;line-height:17px;color:#1e1040;font-family:'Liberation Sans',sans-serif;white-space:pre;transform:scaleX(0.9368);transform-origin:0 0;">8</div>
<div style="left:755.80px;top:185.84px;font-size:12px;line-height:17px;color:#1e1040;font-family:'Liberation Sans',sans-serif;white-space:pre;transform:scaleX(0.7719);transform-origin:0 0;">12</div>
<div style="left:534.60px;top:548.91px;font-size:11.8px;line-height:17px;color:#444444;font-family:'Liberation Sans',sans-serif;white-space:pre;transform:scaleX(0.9012);transform-origin:0 0;">Enter a value</div>
<div style="left:602.5px;top:545.5px;width:45.5px;height:22.5px;box-sizing:border-box;border:1.5px solid #3aa8d8;border-radius:3px;background:#fff;"></div>
<div style="left:640px;top:550px;width:1px;height:14px;background:#222;"></div>
<svg style="position:absolute;left:626px;top:549px;" width="10" height="17" viewBox="0 0 10 17"><path d="M1 1 H4 Q5 1 5 3 V13 Q5 15 4 15 H1 M9 1 H6 Q5 1 5 3 M5 13 Q5 15 6 15 H9" stroke="#111" stroke-width="1.2" fill="none"/></svg>
<div style="left:652px;top:546px;width:44px;height:21px;box-sizing:border-box;border:1px solid #c4c4c4;border-radius:3px;background:linear-gradient(#f0f0f0,#e0e0e0);"></div>
<div style="left:660.60px;top:548.91px;font-size:11.8px;line-height:17px;color:#444444;font-family:'Liberation Sans',sans-serif;white-space:pre;transform:scaleX(0.9119);transform-origin:0 0;">Insert</div>
<div style="left:700.5px;top:546px;width:47.5px;height:21px;box-sizing:border-box;border:1px solid #c4c4c4;border-radius:3px;background:linear-gradient(#f0f0f0,#e0e0e0);"></div>
<div style="left:708.40px;top:548.91px;font-size:11.8px;line-height:17px;color:#444444;font-family:'Liberation Sans',sans-serif;white-space:pre;transform:scaleX(0.9269);transform-origin:0 0;">Delete</div>
</body></html>
